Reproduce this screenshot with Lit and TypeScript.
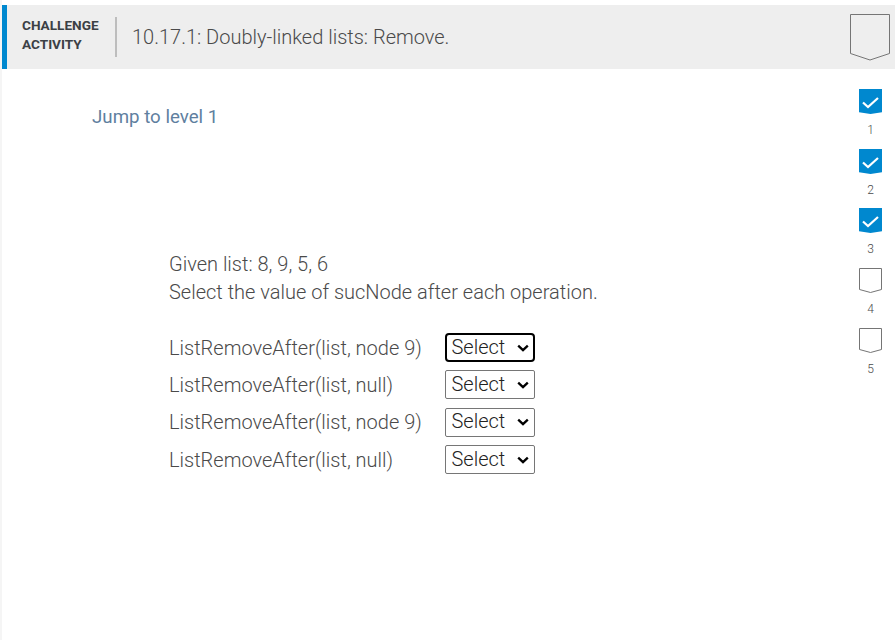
import { LitElement, html, css, svg } from "lit";
import { customElement } from "lit/decorators.js";

const levels = [
  { n: 1, done: true },
  { n: 2, done: true },
  { n: 3, done: true },
  { n: 4, done: false },
  { n: 5, done: false },
];
const ops = [
  "ListRemoveAfter(list, node 9)",
  "ListRemoveAfter(list, null)",
  "ListRemoveAfter(list, node 9)",
  "ListRemoveAfter(list, null)",
];

const chevron = html`<svg class="chev" viewBox="0 0 12 8" width="12" height="8" aria-hidden="true"><path d="M1.2 1.6 6 6.2 10.8 1.6" fill="none" stroke="#000" stroke-width="2.3"/></svg>`;

const badge = (done: boolean) => html`<svg class="badge" viewBox="0 0 23 25" width="23" height="25" aria-hidden="true">
  ${done
    ? svg`<path d="M0 0H23V23.2L11.5 25 0 23.2Z" fill="#0088cf"/><path d="M4 13.5 9 18 19 9" fill="none" stroke="#fff" stroke-width="2.2"/>`
    : svg`<path d="M.5 .5H22.5V21.5L11.5 24.5 .5 21.5Z" fill="#fff" stroke="#757575"/>`}
</svg>`;

@customElement("app-root")
export class AppRoot extends LitElement {
  static styles = css`
    :host {
      display: block;
      width: 895px;
      height: 640px;
      box-sizing: border-box;
      padding-top: 5px;
      border-left: 2px solid #f5f5f5;
      background: #fff;
      color: #4a4a4a;
      font-family: Roboto, "Liberation Sans", sans-serif;
      overflow: hidden;
    }
    .header {
      height: 64px;
      box-sizing: border-box;
      display: flex;
      align-items: center;
      background: #eeeeee;
      border-left: 5px solid #0088cf;
      padding-left: 15px;
      padding-right: 5px;
    }
    .kind {
      width: 93px;
      margin-top: -5px;
      font-size: 13.6px;
      line-height: 18.5px;
      font-weight: 700;
      color: #3b4045;
    }
    .rule {
      width: 2px;
      height: 40px;
      background: #bdbdbd;
    }
    .title {
      flex: 1;
      margin-left: 15px;
      font-size: 20px;
      font-weight: 300;
      color: #4a4a4a;
    }
    .big {
      width: 40px;
      height: 47px;
    }
    .body {
      display: flex;
      justify-content: space-between;
      padding-right: 13px;
    }
    .main {
      padding: 37px 0 0 90px;
    }
    .jump {
      font-size: 18.72px;
      line-height: 22px;
      font-weight: 400;
      color: #5f7f9f;
    }
    .problem {
      margin: 122px 0 0 77px;
      font-size: 20px;
      font-weight: 300;
      line-height: 28px;
      color: #4a4a4a;
    }
    .rows {
      margin-top: 27px;
      display: flex;
      flex-direction: column;
      gap: 8px;
    }
    .row {
      display: flex;
      align-items: center;
      height: 29.3px;
    }
    .expr {
      width: 275.5px;
      padding-top: 0.5px;
    }
    .sel {
      width: 90px;
      height: 29px;
      box-sizing: border-box;
      border: 1px solid #767676;
      border-radius: 2px;
      padding: 0 5px 0 6px;
      display: flex;
      align-items: center;
      justify-content: space-between;
      background: #fff;
      color: #222;
      line-height: 1;
    }
    .sel span { margin-top: -2px; }
    .sel.focus {
      border: 2px solid #000;
      border-radius: 4px;
      padding: 0 4px 0 5px;
    }
    .chev { display: block; }
    .levels {
      padding-top: 20px;
      width: 23px;
      display: flex;
      flex-direction: column;
      align-items: center;
    }
    .level {
      height: 59.7px;
      display: flex;
      flex-direction: column;
      align-items: center;
    }
    .badge { display: block; }
    .num {
      margin-top: 9px;
      font-size: 12px;
      line-height: 14px;
      font-weight: 300;
      color: #4a4a4a;
    }
  `;

  render() {
    return html`
      <div class="header">
        <div class="kind">CHALLENGE ACTIVITY</div>
        <div class="rule"></div>
        <div class="title">10.17.1: Doubly-linked lists: Remove.</div>
        <svg class="big" viewBox="0 0 40 47" aria-hidden="true"><path d="M.5 .5H39.5V39.5L20 46 .5 39.5Z" fill="#eee" stroke="#757575"/></svg>
      </div>
      <div class="body">
        <div class="main">
          <div class="jump">Jump to level 1</div>
          <div class="problem">
            <div>Given list: 8, 9, 5, 6</div>
            <div>Select the value of sucNode after each operation.</div>
            <div class="rows">
              ${ops.map((op, i) => html`<div class="row">
                <div class="expr">${op}</div>
                <div class="sel ${i === 0 ? "focus" : ""}"><span>Select</span>${chevron}</div>
              </div>`)}
            </div>
          </div>
        </div>
        <div class="levels">
          ${levels.map((l) => html`<div class="level">${badge(l.done)}<div class="num">${l.n}</div></div>`)}
        </div>
      </div>
    `;
  }
}
